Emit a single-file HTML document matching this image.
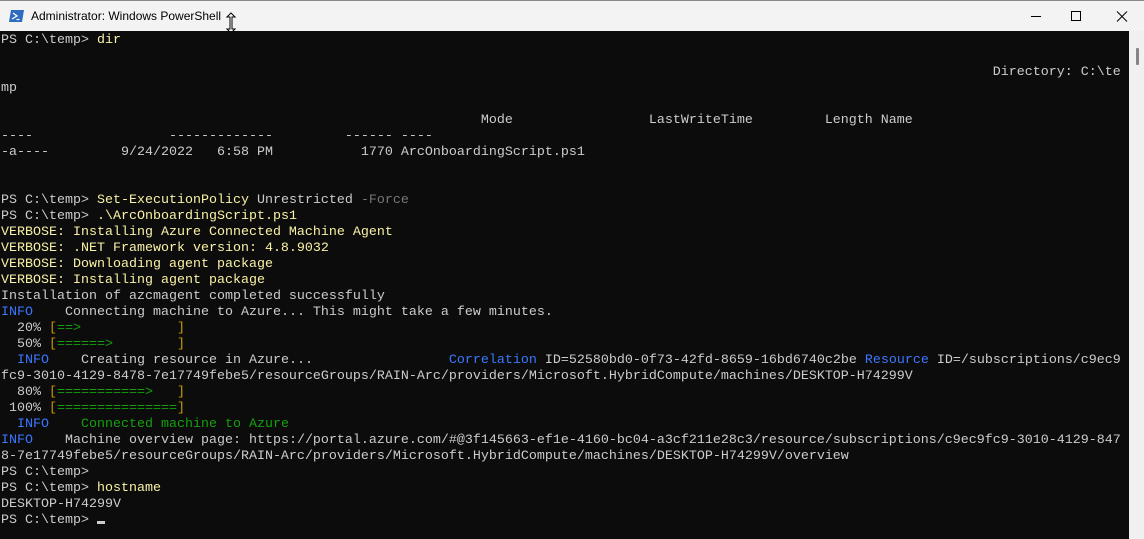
<!DOCTYPE html>
<html><head><meta charset="utf-8"><style>
html,body{margin:0;padding:0;width:1144px;height:539px;overflow:hidden;background:#0c0c0c}
#title{position:absolute;left:0;top:0;width:1144px;height:31px;background:#f3f3f3;border-top:1px solid #8a8a8a;box-sizing:border-box}
#title .t{position:absolute;left:31px;top:8px;font:12px "Liberation Sans",sans-serif;color:#000}
#term{position:absolute;left:0;top:31px;width:1129px;height:508px;background:#0c0c0c}
pre{margin:0;position:absolute;left:1px;top:2px;font:13.33px/16px "Liberation Mono",monospace;color:#cccccc;white-space:pre}
#sb{position:absolute;left:1129px;top:31px;width:15px;height:508px;background:#f0f0f0}
#sb div{position:absolute;left:7px;top:17px;width:3px;height:17px;background:#858585;border-radius:1px}
.y{color:#f9f1a5}.g{color:#767676}.b{color:#3b78ff}.gr{color:#13a10e}.br{color:#c19c00}
</style></head><body>
<div id="title">
<svg style="position:absolute;left:9px;top:9px" width="15" height="12" viewBox="0 0 15 12"><polygon points="2,0 15,0 13,12 0,12" fill="#2d6cc0"/><path d="M4 3 L8 6 L3 9" stroke="#fff" stroke-width="1.3" fill="none"/><path d="M7.5 9.5 H10.5" stroke="#fff" stroke-width="1.2"/></svg>
<span class="t">Administrator: Windows PowerShell</span>
<svg style="position:absolute;left:226px;top:11px" width="10" height="22" viewBox="0 0 10 22"><path d="M5 1 L1 5 H4 V17 H1 L5 21 L9 17 H6 V5 H9 Z" fill="#fff" stroke="#000" stroke-width="1"/></svg>
<svg style="position:absolute;left:1026px;top:10px" width="110" height="12" viewBox="0 0 110 12"><path d="M5 5.5 H15" stroke="#000" stroke-width="1"/><rect x="45.5" y="0.5" width="9" height="9" fill="none" stroke="#000" stroke-width="1"/><path d="M91 0.5 L101 10.5 M101 0.5 L91 10.5" stroke="#000" stroke-width="1"/></svg>
</div>
<div id="term"><pre>PS C:\temp&gt; <span class="y">dir</span>

                                                                                                                            Directory: C:\te
mp

                                                            Mode                 LastWriteTime         Length Name
----                 -------------         ------ ----
-a----         9/24/2022   6:58 PM           1770 ArcOnboardingScript.ps1


PS C:\temp&gt; <span class="y">Set-ExecutionPolicy</span> Unrestricted <span class="g">-Force</span>
PS C:\temp&gt; <span class="y">.\ArcOnboardingScript.ps1</span>
<span class="y">VERBOSE: Installing Azure Connected Machine Agent
VERBOSE: .NET Framework version: 4.8.9032
VERBOSE: Downloading agent package
VERBOSE: Installing agent package</span>
Installation of azcmagent completed successfully
<span class="b">INFO</span>    Connecting machine to Azure... This might take a few minutes.
  20% <span class="br">[</span><span class="gr">==&gt;            </span><span class="br">]</span>
  50% <span class="br">[</span><span class="gr">======&gt;        </span><span class="br">]</span>
  <span class="b">INFO</span>    Creating resource in Azure...                 <span class="b">Correlation</span> ID=52580bd0-0f73-42fd-8659-16bd6740c2be <span class="b">Resource</span> ID=/subscriptions/c9ec9
fc9-3010-4129-8478-7e17749febe5/resourceGroups/RAIN-Arc/providers/Microsoft.HybridCompute/machines/DESKTOP-H74299V
  80% <span class="br">[</span><span class="gr">===========&gt;   </span><span class="br">]</span>
 100% <span class="br">[</span><span class="gr">===============</span><span class="br">]</span>
  <span class="b">INFO</span>    <span class="gr">Connected machine to Azure</span>
<span class="b">INFO</span>    Machine overview page: https://portal.azure.com/#@3f145663-ef1e-4160-bc04-a3cf211e28c3/resource/subscriptions/c9ec9fc9-3010-4129-847
8-7e17749febe5/resourceGroups/RAIN-Arc/providers/Microsoft.HybridCompute/machines/DESKTOP-H74299V/overview
PS C:\temp&gt;
PS C:\temp&gt; <span class="y">hostname</span>
DESKTOP-H74299V
PS C:\temp&gt; <span style="display:inline-block;width:8px;height:3px;background:#ccc;vertical-align:-1px"></span></pre></div>
<div id="sb"><div></div></div>
</body></html>
